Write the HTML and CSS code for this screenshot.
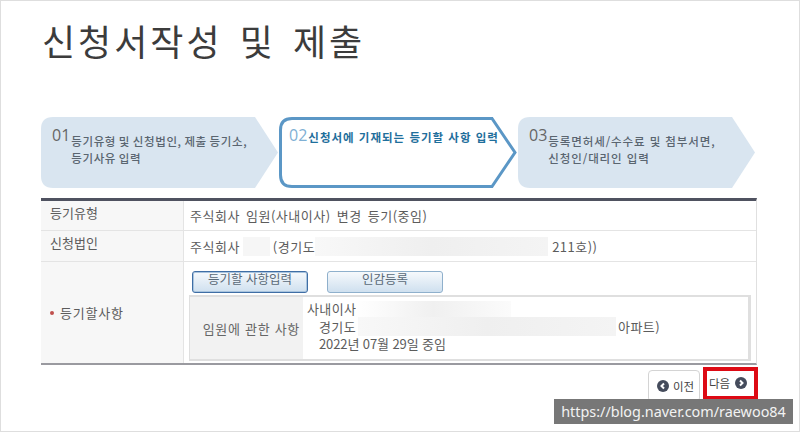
FILE: index.html
```html
<!DOCTYPE html>
<html lang="ko">
<head>
<meta charset="utf-8">
<title>신청서작성 및 제출</title>
<link rel="stylesheet" href="styles.css">
</head>
<body>
<div class="page">
  <h1 class="title">신청서작성 및 제출</h1>
  <div class="steps">
    <div class="step step-a">
      <svg class="shape" viewBox="0 0 237 71"><path d="M12 0H214L237 35.500L214 71H12Q0 71 0 59V12Q0 0 12 0Z" fill="#d9e5f0"/></svg>
      <span class="num">01</span>
      <p class="label">등기유형 및 신청법인, 제출 등기소,<br>등기사유 입력</p>
    </div>
    <div class="step active">
      <svg class="shape" viewBox="0 0 238 71"><path d="M13 1.500H213L236 35.500L213 69.500H13Q1.500 69.500 1.500 58V13Q1.500 1.500 13 1.500Z" fill="#fff" stroke="#5b97c6" stroke-width="3"/></svg>
      <span class="num">02</span>
      <p class="label">신청서에 기재되는 등기할 사항 입력</p>
    </div>
    <div class="step step-c">
      <svg class="shape" viewBox="0 0 237 71"><path d="M12 0H214L237 35.500L214 71H12Q0 71 0 59V12Q0 0 12 0Z" fill="#d9e5f0"/></svg>
      <span class="num">03</span>
      <p class="label">등록면허세/수수료 및 첨부서면,<br>신청인/대리인 입력</p>
    </div>
  </div>

  <div class="form">
    <div class="row row-type">
      <div class="head">등기유형</div>
      <div class="cell">주식회사 임원(사내이사) 변경 등기(중임)</div>
    </div>
    <div class="row row-corp">
      <div class="head">신청법인</div>
      <div class="cell">주식회사<span class="blur b-name"></span>(경기도<span class="blur b-addr"></span>211호))</div>
    </div>
    <div class="row row-items">
      <div class="head head-items"><span class="dot"></span>등기할사항</div>
      <div class="cell cell-items">
        <div class="tabs">
          <div class="tab tab-on">등기할 사항입력</div>
          <div class="tab">인감등록</div>
        </div>
        <div class="detail">
          <div class="detail-head">임원에 관한 사항</div>
          <div class="detail-body">
            <div class="line">사내이사<span class="blur b-person"></span></div>
            <div class="line indent">경기도<span class="blur b-home"></span>아파트)</div>
            <div class="line indent date">2022년 07월 29일 중임</div>
          </div>
        </div>
      </div>
    </div>
  </div>

  <div class="actions">
    <div class="btn btn-prev">
      <svg class="ico" viewBox="0 0 12 12"><circle cx="6" cy="6" r="6" fill="#454c5c"/><path d="M7 3.500L4.500 6L7 8.500" fill="none" stroke="#fff" stroke-width="2"/></svg>
      이전
    </div>
    <div class="btn btn-next">
      다음
      <svg class="ico" viewBox="0 0 12 12"><circle cx="6" cy="6" r="6" fill="#454c5c"/><path d="M5 3.500L7.500 6L5 8.500" fill="none" stroke="#fff" stroke-width="2"/></svg>
    </div>
  </div>
  <div class="watermark">https://blog.naver.com/raewoo84</div>
</div>
</body>
</html>
```
FILE: styles.css
```css
* { box-sizing: border-box; }
html, body { margin: 0; padding: 0; background: #fff; }
.page {
  position: relative;
  width: 800px;
  height: 432px;
  overflow: hidden;
  padding: 0 42px 0 40px;
  border: 1px solid #dedede;
  font-family: "Noto Sans CJK KR", "Liberation Sans", sans-serif;
  font-size: 13px;
  color: #5c5c5c;
}
.title {
  margin: 15px 0 0 1px;
  font-size: 36px;
  line-height: 48px;
  font-weight: 400;
  letter-spacing: 3px;
  word-spacing: 4px;
  color: #3c3c3c;
}
.steps {
  display: flex;
  gap: 1px;
  margin: 53px 0 0;
  height: 71px;
}
.step {
  position: relative;
  width: 237px;
  height: 71px;
  flex: none;
  padding: 7px 0 0 11px;
  display: flex;
  color: #5a6570;
}
.step.active { width: 238px; color: #1f6f9c; padding-left: 10px; }
.shape { position: absolute; left: 0; top: 0; width: 100%; height: 100%; }
.num {
  position: relative;
  font-family: "Open Sans", "Liberation Sans", sans-serif;
  font-size: 16px;
  line-height: 22px;
  color: #666;
  margin-right: 1px;
}
.active .num { color: #7fb0d4; }
.label {
  position: relative;
  margin: 9px 0 0;
  font-size: 11.500px;
  line-height: 17px;
  font-weight: 500;
  white-space: nowrap;
}
.step-a .label { letter-spacing: .6px; word-spacing: -1px; }
.step-c .label { letter-spacing: .9px; }
.active .label { letter-spacing: 1px; margin-top: 5px; font-weight: 700; }
.form {
  margin-top: 10px;
  width: 716px;
  border-top: 3px solid #4f5260;
  border-bottom: 2px solid #9a9aa0;
  border-right: 1px solid #e0e0e0;
}
.row { display: flex; border-bottom: 1px solid #e4e4e4; }
.row:last-child { border-bottom: 0; }
.row-type { height: 30px; }
.row-corp { height: 31px; }
.row-items { height: 101px; }
.head {
  width: 143px;
  flex: none;
  background: #f7f7f7;
  border-right: 1px solid #e4e4e4;
  padding: 3px 0 0 9px;
  line-height: 18px;
}
.head-items { display: flex; align-items: center; padding: 0 0 0 9px; letter-spacing: .8px; }
.dot {
  width: 4px;
  height: 4px;
  border-radius: 50%;
  background: #c0504d;
  margin-right: 6px;
}
.cell {
  flex: 1;
  display: flex;
  align-items: center;
  padding-left: 6px;
  white-space: nowrap;
  letter-spacing: .5px;
  word-spacing: 2px;
}
.cell-items { display: block; padding: 9px 0 0 6px; letter-spacing: 0; word-spacing: 0; }
.blur { display: inline-block; height: 19px; background: linear-gradient(90deg, #f8f8f8, #efefef 50%, #f4f4f4); }
.b-name { width: 27px; margin: 0 3px 0 3px; background: #f6f6f6; }
.b-addr { width: 233px; margin: 0 4px 0 0; }
.b-person { width: 155px; height: 16px; margin-left: 0; background: linear-gradient(90deg, #fff, #f0f0f0 50%, #fbfbfb); }
.b-home { width: 258px; height: 19px; margin: 0 2px 0 2px; }
.tabs { display: flex; gap: 19px; margin-left: 2px; }
.tab {
  width: 116px;
  height: 22px;
  border: 1px solid #8fb0cc;
  border-radius: 3px;
  background: linear-gradient(#f6f9fc, #cfe0ef);
  text-align: center;
  line-height: 14px;
  font-size: 12.500px;
  color: #5a6a78;
}
.tab-on { border-color: #3f6ea5; box-shadow: inset 0 0 0 1px #a9c4de; }
.detail {
  display: flex;
  width: 562px;
  height: 66px;
  margin: 2px 0 0 -1px;
  border: 2px solid #dfdfdf;
  border-width: 2px 3px 2px 1px;
}
.detail-head {
  width: 113px;
  flex: none;
  background: #f2f2f2;
  display: flex;
  align-items: center;
  justify-content: flex-end;
  padding-right: 3px;
  color: #666;
  letter-spacing: .7px;
}
.detail-body { padding: 3px 0 0 4px; flex: 1; }
.line { height: 17.500px; line-height: 17.500px; display: flex; align-items: center; letter-spacing: .4px; }
.indent { padding-left: 12px; }
.date { letter-spacing: -.1px; }
.actions {
  display: flex;
  justify-content: flex-end;
  align-items: flex-start;
  gap: 3px;
  width: 717px;
  height: 36px;
  margin-top: 1px;
}
.btn {
  display: flex;
  align-items: center;
  font-size: 11.500px;
  color: #444;
  background: #fff;
}
.btn-prev {
  width: 52px;
  height: 32px;
  margin-top: 4px;
  padding-left: 8px;
  gap: 4px;
  border: 1px solid #d4d4d4;
  border-radius: 4px;
}
.btn-next {
  width: 55px;
  height: 33px;
  margin-top: 1px;
  border: 4px solid #dd0a14;
  padding: 0 0 1px 2px;
  gap: 5px;
}
.ico { width: 12px; height: 12px; flex: none; }
.watermark {
  position: absolute;
  left: 553px;
  top: 398px;
  width: 239px;
  height: 25px;
  background: #777;
  color: #f2f2f2;
  font-family: "Noto Sans", "Liberation Sans", sans-serif;
  font-size: 14.400px;
  line-height: 25px;
  text-align: center;
  white-space: nowrap;
}
```
